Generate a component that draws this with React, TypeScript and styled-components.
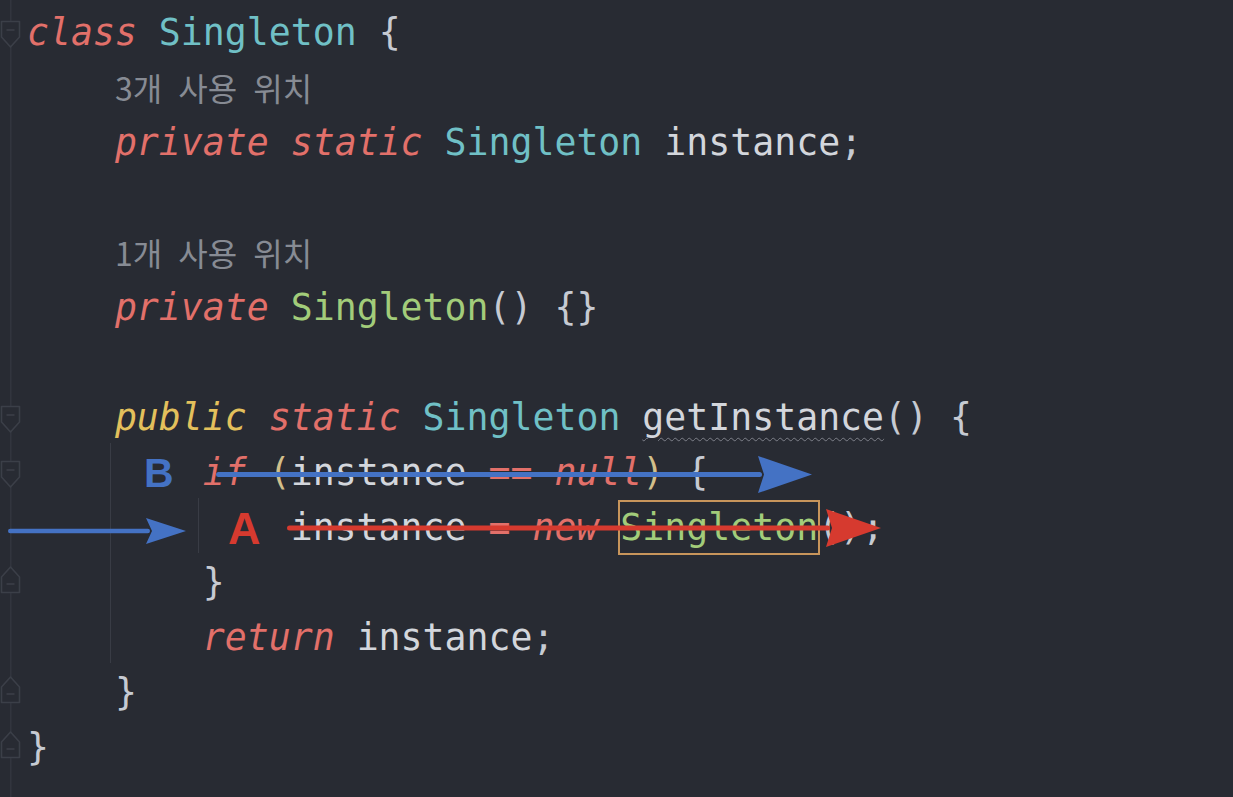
import React from "react";
import styled, { createGlobalStyle, css } from "styled-components";

const BG = "#282b33";

const GlobalStyle = createGlobalStyle`
  html, body { margin: 0; padding: 0; background: ${BG}; overflow: hidden; }
  #root { min-height: 100vh; }
`;

type Kind = "kw" | "pub" | "type" | "ctor" | "ident" | "punc" | "paren" | "op";

const colors: Record<Kind, string> = {
  kw: "#e2706a",
  pub: "#e3c05c",
  type: "#70c0c6",
  ctor: "#a2cc7a",
  ident: "#d3d6dc",
  punc: "#c6cad2",
  paren: "#d2bf8a",
  op: "#e2706a",
};

const italicKinds: Kind[] = ["kw", "pub"];

const Editor = styled.div`
  position: relative;
  min-height: 100vh;
  padding-top: 5px;
  box-sizing: border-box;
  background: ${BG} linear-gradient(#32353e, #32353e) no-repeat 10px 0 / 1.5px 100%;
`;

const Line = styled.div`
  display: flex;
  height: 55px;
`;

const Gutter = styled.div<{ $fold?: "down" | "up" }>`
  width: 27px;
  flex: none;
  display: flex;
  align-items: flex-start;
  padding-top: ${(p) => (p.$fold === "up" ? 10 : 15)}px;
  box-sizing: border-box;
`;

const CodeText = styled.div`
  flex: 1;
  white-space: pre;
  font-family: "DejaVu Sans Mono", monospace;
  font-size: 36.5px;
  line-height: 55px;
  color: ${colors.ident};
`;

const Indent = styled.span<{ $guide?: boolean }>`
  display: inline-block;
  width: 4ch;
  height: 55px;
  vertical-align: top;
  position: relative;
  ${(p) =>
    p.$guide &&
    css`
      &::before {
        content: "";
        position: absolute;
        left: -5px;
        top: -2px;
        bottom: 2px;
        width: 1px;
        background: #393c45;
      }
    `}
`;

const Tok = styled.span<{ $k: Kind }>`
  color: ${(p) => colors[p.$k]};
  font-style: ${(p) => (italicKinds.includes(p.$k) ? "italic" : "normal")};
`;

const Wavy = styled(Tok)`
  text-decoration: underline wavy #7d8089;
  text-decoration-thickness: 1px;
  text-underline-offset: 7px;
`;

const Boxed = styled(Tok)`
  display: inline-block;
  height: 55px;
  line-height: 51px;
  box-sizing: border-box;
  border: 2px solid #c8955b;
  margin: 0 -2px;
`;

const Hint = styled.span`
  font-family: "Noto Sans CJK KR", "Noto Sans", sans-serif;
  font-size: 32px;
  word-spacing: 9px;
  color: #878b94;
`;

const Label = styled.span<{ $color: string; $x: number; $y: number; $size: number }>`
  position: absolute;
  left: ${(p) => p.$x}px;
  top: ${(p) => p.$y}px;
  font-family: "Liberation Sans", Arial, sans-serif;
  font-weight: 700;
  font-size: ${(p) => p.$size}px;
  line-height: 1;
  color: ${(p) => p.$color};
`;

const ArrowSvg = styled.svg<{ $x: number; $y: number }>`
  position: absolute;
  left: ${(p) => p.$x}px;
  top: ${(p) => p.$y}px;
  overflow: visible;
`;

const FoldSvg = styled.svg`
  flex: none;
  display: block;
`;

const FoldIcon: React.FC<{ dir: "down" | "up" }> = ({ dir }) => (
  <FoldSvg width="22" height="29" viewBox="0 0 22 29">
    {dir === "down" ? (
      <>
        <path d="M1.5 1.5 H19.5 V17 L10.5 27 L1.5 17 Z" fill={BG} stroke="#3b3f48" strokeWidth="1.6" strokeLinejoin="round" />
        <path d="M6.5 10 H14.5" stroke="#3b3f48" strokeWidth="1.6" />
      </>
    ) : (
      <>
        <path d="M1.5 27.5 H19.5 V12 L10.5 2 L1.5 12 Z" fill={BG} stroke="#3b3f48" strokeWidth="1.6" strokeLinejoin="round" />
        <path d="M6.5 19 H14.5" stroke="#3b3f48" strokeWidth="1.6" />
      </>
    )}
  </FoldSvg>
);

const Arrow: React.FC<{ x: number; y: number; length: number; headW: number; headH: number; color: string; thick?: number }> = ({
  x,
  y,
  length,
  headW,
  headH,
  color,
  thick = 5,
}) => {
  const cy = headH / 2;
  return (
    <ArrowSvg $x={x} $y={y - cy} width={length} height={headH} viewBox={`0 0 ${length} ${headH}`}>
      <rect x={0} y={cy - thick / 2} width={length - headW + 4} height={thick} rx={thick / 2} fill={color} />
      <path d={`M${length - headW} 0 L${length} ${cy} L${length - headW} ${headH} L${length - headW + 6} ${cy} Z`} fill={color} />
    </ArrowSvg>
  );
};

const Row: React.FC<{ fold?: "down" | "up"; children?: React.ReactNode }> = ({ fold, children }) => (
  <Line>
    <Gutter $fold={fold}>{fold && <FoldIcon dir={fold} />}</Gutter>
    <CodeText>{children}</CodeText>
  </Line>
);

export default function App() {
  return (
    <>
      <GlobalStyle />
      <Editor>
        <Row fold="down">
          <Tok $k="kw">class</Tok> <Tok $k="type">Singleton</Tok> <Tok $k="punc">{"{"}</Tok>
        </Row>
        <Row>
          <Indent />
          <Hint>3개 사용 위치</Hint>
        </Row>
        <Row>
          <Indent />
          <Tok $k="kw">private</Tok> <Tok $k="kw">static</Tok> <Tok $k="type">Singleton</Tok>{" "}
          <Tok $k="ident">instance</Tok>
          <Tok $k="punc">;</Tok>
        </Row>
        <Row />
        <Row>
          <Indent />
          <Hint>1개 사용 위치</Hint>
        </Row>
        <Row>
          <Indent />
          <Tok $k="kw">private</Tok> <Tok $k="ctor">Singleton</Tok>
          <Tok $k="punc">()</Tok> <Tok $k="punc">{"{}"}</Tok>
        </Row>
        <Row />
        <Row fold="down">
          <Indent />
          <Tok $k="pub">public</Tok> <Tok $k="kw">static</Tok> <Tok $k="type">Singleton</Tok>{" "}
          <Wavy $k="ident">getInstance</Wavy>
          <Tok $k="punc">()</Tok> <Tok $k="punc">{"{"}</Tok>
        </Row>
        <Row fold="down">
          <Indent />
          <Indent $guide />
          <Tok $k="kw">if</Tok> <Tok $k="paren">(</Tok>
          <Tok $k="ident">instance</Tok> <Tok $k="op">==</Tok> <Tok $k="kw">null</Tok>
          <Tok $k="paren">)</Tok> <Tok $k="punc">{"{"}</Tok>
        </Row>
        <Row>
          <Indent />
          <Indent $guide />
          <Indent $guide />
          <Tok $k="ident">instance</Tok> <Tok $k="op">=</Tok> <Tok $k="kw">new</Tok> <Boxed $k="ctor">Singleton</Boxed>
          <Tok $k="punc">()</Tok>
          <Tok $k="punc">;</Tok>
        </Row>
        <Row fold="up">
          <Indent />
          <Indent $guide />
          <Tok $k="punc">{"}"}</Tok>
        </Row>
        <Row>
          <Indent />
          <Indent $guide />
          <Tok $k="kw">return</Tok> <Tok $k="ident">instance</Tok>
          <Tok $k="punc">;</Tok>
        </Row>
        <Row fold="up">
          <Indent />
          <Tok $k="punc">{"}"}</Tok>
        </Row>
        <Row fold="up">
          <Tok $k="punc">{"}"}</Tok>
        </Row>

        <Arrow x={216} y={474} length={596} headW={54} headH={37} color="#4472c4" />
        <Arrow x={287} y={528} length={594} headW={55} headH={38} color="#d63a2f" />
        <Arrow x={8} y={531} length={178} headW={40} headH={26} color="#4472c4" thick={4.5} />
        <Label $color="#4472c4" $x={144} $y={453} $size={41}>
          B
        </Label>
        <Label $color="#d63a2f" $x={228} $y={506} $size={45}>
          A
        </Label>
      </Editor>
    </>
  );
}
